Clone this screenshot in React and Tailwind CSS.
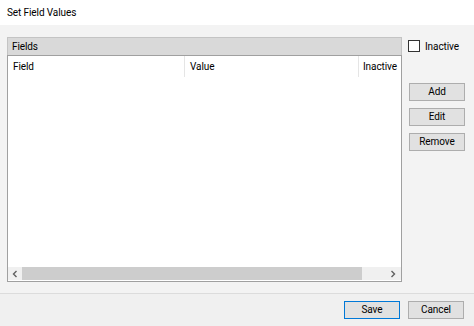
import React from 'react';

const font = { fontFamily: 'Roboto, "Noto Sans", sans-serif' };

function Btn({ children, primary }) {
  return (
    <button
      className={
        primary
          ? 'h-[18px] w-[56px] bg-[#e1e1e1] border border-[#0078d7] text-[10px] tracking-[-0.1px] leading-none text-black'
          : 'h-[18px] w-[56px] bg-[#e1e1e1] border border-[#adadad] text-[10px] tracking-[-0.1px] leading-none text-black'
      }
    >
      {children}
    </button>
  );
}

export default function App() {
  return (
    <div
      className="w-[474px] h-[326px] flex flex-col bg-[#f0f0f0] text-black text-[10px] tracking-[-0.1px] overflow-hidden"
      style={font}
    >
      {/* title */}
      <div className="h-[25px] bg-white flex items-center pl-[7px] pb-[1px]">Set Field Values</div>

      {/* body */}
      <div className="h-[268px] flex pt-[12px] pl-[7px] bg-[#f3f3f3]">
        {/* fields group */}
        <div className="w-[395px] h-[245px] flex flex-col">
          <div className="h-[18px] bg-[#d9d9d9] border border-[#c4c4c4] border-b-0 flex items-center px-[4px]">
            Fields
          </div>
          <div className="flex-1 bg-white border border-[#a0a0a0] flex flex-col">
            <div className="h-[21px] flex">
              <div className="w-[177px] flex items-center pl-[5px] border-r border-[#e5e5e5]">Field</div>
              <div className="w-[174px] flex items-center pl-[5px] border-r border-[#e5e5e5]">Value</div>
              <div className="flex-1 flex items-center pl-[4px]">Inactive</div>
            </div>
            <div className="flex-1" />
            <div className="h-[13px] mb-[1px] flex items-center bg-[#f0f0f0]">
              <div className="w-[14px] h-full flex items-center justify-center">
                <svg width="6" height="8" viewBox="0 0 6 8">
                  <path d="M4.5 1 L1.5 4 L4.5 7" fill="none" stroke="#606060" strokeWidth="1.4" />
                </svg>
              </div>
              <div className="w-[340px] h-full bg-[#cdcdcd]" />
              <div className="flex-1 h-full flex items-center justify-end pr-[5px]">
                <svg width="6" height="8" viewBox="0 0 6 8">
                  <path d="M1.5 1 L4.5 4 L1.5 7" fill="none" stroke="#606060" strokeWidth="1.4" />
                </svg>
              </div>
            </div>
          </div>
        </div>

        {/* right column */}
        <div className="flex flex-col pl-[6px]">
          <label className="h-[14px] mt-[2px] flex items-center gap-[4px]">
            <span className="w-[12px] h-[12px] border border-[#333333] bg-white inline-block" />
            <span className="ml-[1px]">Inactive</span>
          </label>
          <div className="flex flex-col gap-[7px] mt-[30px] pl-[1px]">
            <Btn>Add</Btn>
            <Btn>Edit</Btn>
            <Btn>Remove</Btn>
          </div>
        </div>
      </div>

      {/* footer */}
      <div className="flex-1 border-t border-[#dcdcdc] flex justify-end items-start pt-[7px] pr-[10px] gap-[8px]">
        <Btn primary>Save</Btn>
        <Btn>Cancel</Btn>
      </div>
    </div>
  );
}
